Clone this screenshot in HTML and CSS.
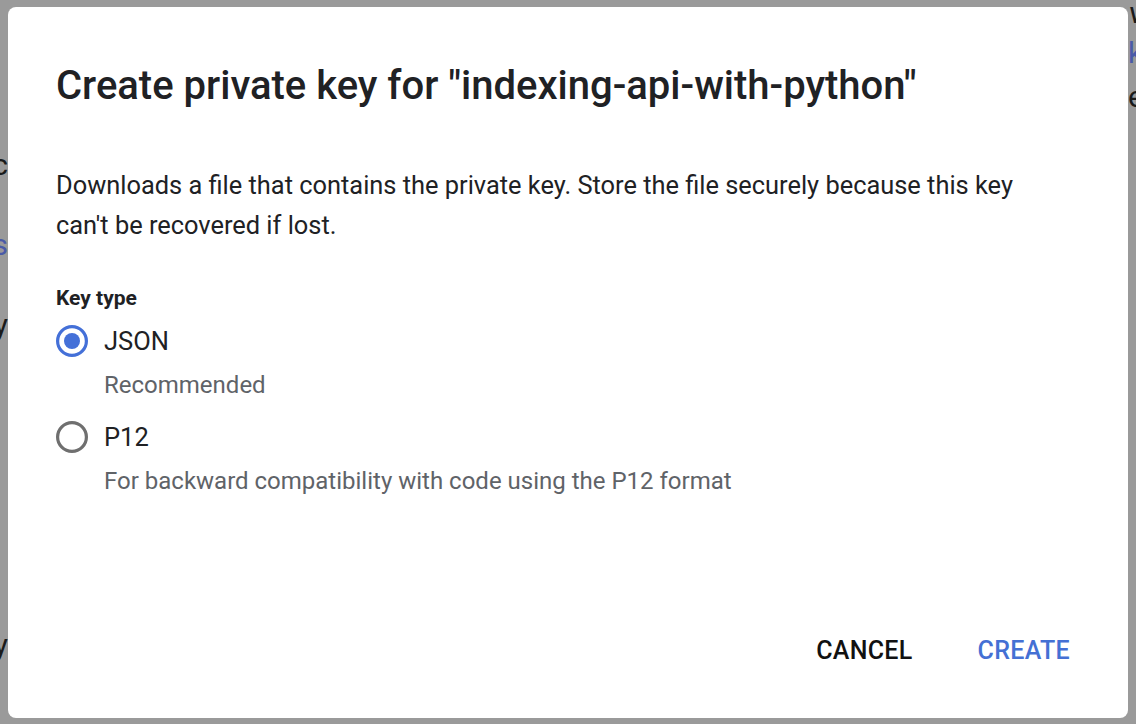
FILE: index.html
```html
<!DOCTYPE html>
<html lang="en">
<head>
    <meta charset="UTF-8">
    <title>Create private key</title>
    <link rel="stylesheet" href="styles.css">
</head>
<body>
    <div class="backdrop">
        <div class="edge edge-left">
            <span class="bg-line top">Footer</span>
            <span class="bg-line">Go to the c</span>
            <span class="bg-line link">Details</span>
            <span class="bg-line">Use a key</span>
            <span class="bg-line low">Managed by</span>
        </div>
        <div class="dialog">
            <h1 class="dialog-title">Create private key for "indexing-api-with-python"</h1>
            <p class="dialog-text">Downloads a file that contains the private key. Store the file securely because this key can't be recovered if lost.</p>

            <div class="field-label">Key type</div>
            <label class="radio-row">
                <svg class="radio" width="32" height="32" viewBox="0 0 32 32">
                    <circle cx="16" cy="16" r="14.4" fill="none" stroke="#4470d8" stroke-width="3.2"></circle>
                    <circle cx="16" cy="16" r="8" fill="#4470d8"></circle>
                </svg>
                <span class="radio-label">JSON</span>
            </label>
            <div class="radio-hint">Recommended</div>

            <label class="radio-row">
                <svg class="radio" width="32" height="32" viewBox="0 0 32 32">
                    <circle cx="16" cy="16" r="14.4" fill="none" stroke="#6f6f6f" stroke-width="3.2"></circle>
                </svg>
                <span class="radio-label">P12</span>
            </label>
            <div class="radio-hint">For backward compatibility with code using the P12 format</div>

            <div class="dialog-actions">
                <button class="btn btn-cancel">CANCEL</button>
                <button class="btn btn-create">CREATE</button>
            </div>
        </div>
        <div class="edge edge-right">
            <span class="bg-line top">Wi</span>
            <span class="bg-line link">kl</span>
            <span class="bg-line">e</span>
        </div>
    </div>
</body>
</html>
```

FILE: styles.css
```css
:root {
    --text-color: #202124;
    --muted-color: #5f6368;
    --blue: #4470d4;
    --scrim: #9a9a9a;
}
body {
    margin: 0;
    padding: 0;
    font-family: Roboto, 'Liberation Sans', Arial, sans-serif;
    color: var(--text-color);
    background: var(--scrim);
}
.backdrop {
    display: grid;
    grid-template-columns: 8px 1120px 8px;
    height: 724px;
    padding: 7px 0 6px;
    box-sizing: border-box;
    overflow: hidden;
}
.edge {
    display: flex;
    flex-direction: column;
    overflow: hidden;
    font-size: 30px;
    color: #1a1a1a;
}
.edge-left {
    align-items: flex-end;
}
.bg-line {
    white-space: nowrap;
    line-height: 40px;
    height: 40px;
}
.edge-left .bg-line.top {
    margin-top: -30px;
    margin-bottom: 128px;
}
.edge-left .bg-line:nth-child(3) {
    margin-top: 40px;
}
.edge-left .bg-line:nth-child(4) {
    margin-top: 40px;
}
.edge-left .bg-line.low {
    margin-top: 280px;
}
.edge-right .bg-line.top {
    margin-top: -14px;
}
.edge-right .bg-line:nth-child(3) {
    margin-top: 4px;
}
.bg-line.link {
    color: #4a5aa8;
}
.dialog {
    display: flex;
    flex-direction: column;
    background: #fff;
    border-radius: 8px;
    padding: 55px 45px 44px 48px;
}
.dialog-title {
    margin: 0;
    font-size: 40px;
    line-height: 48px;
    font-weight: 500;
    letter-spacing: 0;
}
.dialog-text {
    margin: 55px 0 0;
    font-size: 25.4px;
    line-height: 40px;
    max-width: 990px;
}
.field-label {
    margin-top: 39px;
    font-size: 21px;
    line-height: 28px;
    font-weight: 700;
}
.radio-row {
    display: flex;
    align-items: center;
    gap: 16px;
    height: 40px;
    margin-top: 9px;
}
.radio-label {
    font-size: 25.5px;
}
.radio-hint {
    margin: 8px 0 16px 48px;
    font-size: 24px;
    line-height: 32px;
    color: var(--muted-color);
}
.radio-hint + .radio-row {
    margin-top: 0;
}
.dialog-actions {
    margin-top: auto;
    display: flex;
    justify-content: flex-end;
    gap: 39px;
}
.btn {
    font-family: Roboto, 'Liberation Sans', Arial, sans-serif;
    font-size: 25px;
    font-weight: 500;
    letter-spacing: 0.3px;
    background: none;
    border: none;
    height: 48px;
    padding: 0 13px;
    cursor: pointer;
}
.btn-cancel {
    color: #111;
}
.btn-create {
    color: var(--blue);
}
```
